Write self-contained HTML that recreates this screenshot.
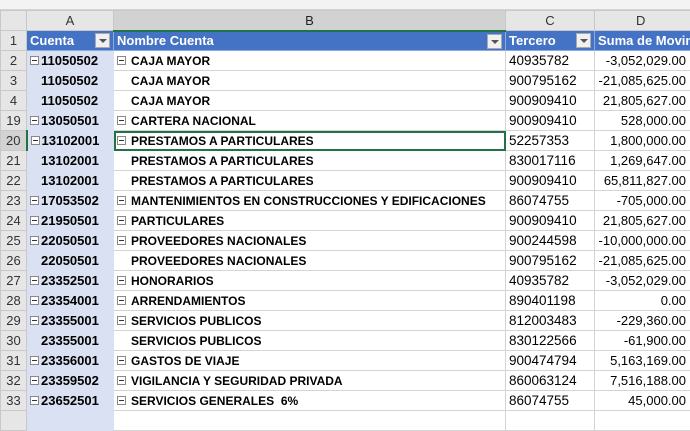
<!DOCTYPE html>
<html><head><meta charset="utf-8"><style>
*{margin:0;padding:0;box-sizing:border-box}
body{width:690px;height:414px;overflow:hidden;background:#fff;font-family:"Liberation Sans",Arial,sans-serif;position:relative}
.top{position:absolute;left:0;top:0;width:690px;height:10px;background:#f3f3f3;border-bottom:1px solid #d4d4d4}
table{position:absolute;left:0;top:10px;border-collapse:collapse;table-layout:fixed;width:704px}
td{height:20px;border:1px solid #d4d4d4;white-space:nowrap;overflow:hidden;font-size:13.5px;padding:0 3px;color:#000}
tr.h td{background:#e6e6e6;text-align:center;color:#333;font-size:13px;border-color:#c8c8c8}
tr.h td.sel{background:#d2d2d2;border-bottom:2px solid #217346;color:#222}
td.rn{background:#e6e6e6;text-align:center;color:#333;font-size:13px;border-color:#c8c8c8;padding:0}
td.rn.sel{background:#d2d2d2;border-right:2px solid #217346}
tr.hd td.c{background:#4472c4;color:#fff;font-weight:bold;font-size:13px;position:relative;border-color:#8ea9db}
.dd{position:absolute;right:3px;top:2px;width:15px;height:15px;background:#f0f0f0;border:1px solid #aaa}
.dd:after{content:"";position:absolute;left:3px;top:5px;border-left:4px solid transparent;border-right:4px solid transparent;border-top:4px solid #555}
td.a{background:#d9e1f2;font-weight:bold;font-size:13px;border-color:#d9e1f2;padding-left:14px;position:relative}
td.b{font-weight:bold;font-size:12px;padding-left:17px;position:relative}
td.n{text-align:right;padding-right:18px;font-size:13px}
.m{position:absolute;left:3px;top:5px;width:9px;height:9px;border:1px solid #888;background:#fff}
.m:after{content:"";position:absolute;left:1px;top:3px;width:5px;height:1px;background:#333}
td.act{outline:2px solid #217346;outline-offset:-2px}
</style></head><body>
<div class="top"></div>
<table>
<colgroup><col style="width:26px"><col style="width:87px"><col style="width:392px"><col style="width:89px"><col style="width:110px"></colgroup>
<tr class="h"><td></td><td>A</td><td class="sel">B</td><td>C</td><td style="text-align:left;padding-left:41px">D</td></tr>
<tr class="hd"><td class="rn">1</td><td class="c">Cuenta<span class="dd"></span></td><td class="c">Nombre Cuenta<span class="dd"></span></td><td class="c">Tercero<span class="dd"></span></td><td class="c">Suma de Movim</td></tr>
<tr><td class="rn">2</td><td class="a"><span class="m"></span>11050502</td><td class="b"><span class="m"></span>CAJA MAYOR</td><td>40935782</td><td class="n">-3,052,029.00</td></tr>
<tr><td class="rn">3</td><td class="a">11050502</td><td class="b">CAJA MAYOR</td><td>900795162</td><td class="n">-21,085,625.00</td></tr>
<tr><td class="rn">4</td><td class="a">11050502</td><td class="b">CAJA MAYOR</td><td>900909410</td><td class="n">21,805,627.00</td></tr>
<tr><td class="rn">19</td><td class="a"><span class="m"></span>13050501</td><td class="b"><span class="m"></span>CARTERA NACIONAL</td><td>900909410</td><td class="n">528,000.00</td></tr>
<tr><td class="rn sel">20</td><td class="a"><span class="m"></span>13102001</td><td class="b act"><span class="m"></span>PRESTAMOS A PARTICULARES</td><td>52257353</td><td class="n">1,800,000.00</td></tr>
<tr><td class="rn">21</td><td class="a">13102001</td><td class="b">PRESTAMOS A PARTICULARES</td><td>830017116</td><td class="n">1,269,647.00</td></tr>
<tr><td class="rn">22</td><td class="a">13102001</td><td class="b">PRESTAMOS A PARTICULARES</td><td>900909410</td><td class="n">65,811,827.00</td></tr>
<tr><td class="rn">23</td><td class="a"><span class="m"></span>17053502</td><td class="b"><span class="m"></span>MANTENIMIENTOS EN CONSTRUCCIONES Y EDIFICACIONES</td><td>86074755</td><td class="n">-705,000.00</td></tr>
<tr><td class="rn">24</td><td class="a"><span class="m"></span>21950501</td><td class="b"><span class="m"></span>PARTICULARES</td><td>900909410</td><td class="n">21,805,627.00</td></tr>
<tr><td class="rn">25</td><td class="a"><span class="m"></span>22050501</td><td class="b"><span class="m"></span>PROVEEDORES NACIONALES</td><td>900244598</td><td class="n">-10,000,000.00</td></tr>
<tr><td class="rn">26</td><td class="a">22050501</td><td class="b">PROVEEDORES NACIONALES</td><td>900795162</td><td class="n">-21,085,625.00</td></tr>
<tr><td class="rn">27</td><td class="a"><span class="m"></span>23352501</td><td class="b"><span class="m"></span>HONORARIOS</td><td>40935782</td><td class="n">-3,052,029.00</td></tr>
<tr><td class="rn">28</td><td class="a"><span class="m"></span>23354001</td><td class="b"><span class="m"></span>ARRENDAMIENTOS</td><td>890401198</td><td class="n">0.00</td></tr>
<tr><td class="rn">29</td><td class="a"><span class="m"></span>23355001</td><td class="b"><span class="m"></span>SERVICIOS PUBLICOS</td><td>812003483</td><td class="n">-229,360.00</td></tr>
<tr><td class="rn">30</td><td class="a">23355001</td><td class="b">SERVICIOS PUBLICOS</td><td>830122566</td><td class="n">-61,900.00</td></tr>
<tr><td class="rn">31</td><td class="a"><span class="m"></span>23356001</td><td class="b"><span class="m"></span>GASTOS DE VIAJE</td><td>900474794</td><td class="n">5,163,169.00</td></tr>
<tr><td class="rn">32</td><td class="a"><span class="m"></span>23359502</td><td class="b"><span class="m"></span>VIGILANCIA Y SEGURIDAD PRIVADA</td><td>860063124</td><td class="n">7,516,188.00</td></tr>
<tr><td class="rn">33</td><td class="a"><span class="m"></span>23652501</td><td class="b"><span class="m"></span>SERVICIOS GENERALES&nbsp; 6%</td><td>86074755</td><td class="n">45,000.00</td></tr>
<tr><td class="rn"></td><td class="a"></td><td></td><td></td><td></td></tr>
</table>
</body></html>
